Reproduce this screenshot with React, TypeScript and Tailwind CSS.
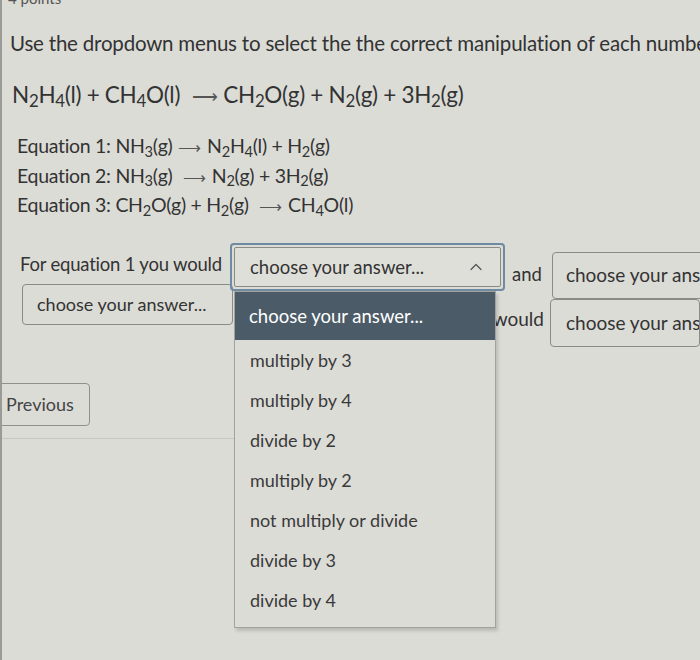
import { ChevronUp } from 'lucide-react';

const options = [
    'multiply by 3',
    'multiply by 4',
    'divide by 2',
    'multiply by 2',
    'not multiply or divide',
    'divide by 3',
    'divide by 4',
];

// 화학식 아래첨자 (preflight의 sub 스타일 사용)
const Sub = ({ children }: { children: React.ReactNode }) => <sub>{children}</sub>;

const Arrow = () => <span className="text-[0.8em] text-[#555] mx-[6px]">⟶</span>;

export default function App() {
    return (
        <div
            className="w-[700px] h-[660px] overflow-hidden bg-[#dcdcd7] text-[#333] relative border-l-2 border-[#9a9a96]"
            style={{ fontFamily: 'Lato, "Open Sans", sans-serif' }}
        >
            {/* 상단 점수 (잘림) */}
            <div className="-mt-[13px] ml-[6px] text-[15px] text-[#555]">4 points</div>

            <p className="mt-[18px] ml-[8px] text-[20.5px] whitespace-nowrap tracking-[-0.2px]">
                Use the dropdown menus to select the the correct manipulation of each number.
            </p>

            <p className="mt-[20px] ml-[10px] text-[22.5px] whitespace-nowrap tracking-[-0.3px]">
                N<Sub>2</Sub>H<Sub>4</Sub>(l) + CH<Sub>4</Sub>O(l) <Arrow />CH<Sub>2</Sub>O(g) + N<Sub>2</Sub>(g) + 3H<Sub>2</Sub>(g)
            </p>

            <div className="mt-[20px] ml-[15px] text-[19.5px] leading-[28.5px] whitespace-nowrap tracking-[-0.3px]">
                <div>Equation 1: NH<Sub>3</Sub>(g)<Arrow />N<Sub>2</Sub>H<Sub>4</Sub>(l) + H<Sub>2</Sub>(g)</div>
                <div>Equation 2: NH<Sub>3</Sub>(g) <Arrow />N<Sub>2</Sub>(g) + 3H<Sub>2</Sub>(g)</div>
                <div>Equation 3: CH<Sub>2</Sub>O(g) + H<Sub>2</Sub>(g) <Arrow />CH<Sub>4</Sub>O(l)</div>
            </div>

            {/* 드롭다운 행 1 */}
            <div className="mt-[22px] flex items-start text-[18.5px] leading-[24px] whitespace-nowrap">
                <span className="ml-[18px] mt-[9px] w-[210px] shrink-0 tracking-[-0.2px]">For equation 1 you would</span>
                <div className="relative z-10 shrink-0">
                    <div className="w-[275px] h-[48px] rounded-[4px] border-2 border-[#6f8aa3] p-[2px]">
                        <div className="h-full rounded-[2px] border border-[#8a8a86] bg-[#dfdfda] flex items-center justify-between pl-[15px] pr-[14px]">
                            <span>choose your answer...</span>
                            <ChevronUp size={20} strokeWidth={1.5} className="text-[#555]" />
                        </div>
                    </div>
                    {/* 펼쳐진 옵션 목록 */}
                    <ul className="absolute left-[4px] top-[48px] w-[262px] pb-[7px] bg-[#dcdcd7] border border-[#a2a29e] shadow-[2px_3px_3px_rgba(0,0,0,0.15)] text-[18px]">
                        <li className="h-[48px] bg-[#4b5c68] text-white flex items-center pl-[14px] text-[18.5px]">
                            choose your answer...
                        </li>
                        {options.map((o) => (
                            <li key={o} className="h-[40px] flex items-center pl-[15px] text-[#3a3a3a]">
                                {o}
                            </li>
                        ))}
                    </ul>
                </div>
                <span className="ml-[7px] mt-[19px]">and</span>
                <div className="ml-[10px] mt-[9px] w-[160px] h-[47px] shrink-0 rounded-[4px] border border-[#8a8a86] flex items-center pl-[13px] text-[19px]">
                    choose your answer...
                </div>
            </div>

            {/* 드롭다운 행 2 */}
            <div className="-mt-[15px] flex items-start text-[18px] leading-[24px] whitespace-nowrap">
                <div className="ml-[20px] w-[211px] h-[41px] shrink-0 rounded-[4px] border border-[#8a8a86] flex items-center pl-[14px]">
                    choose your answer...
                </div>
                <span className="flex-1 text-right mr-[6px] mt-[23px] text-[19px]">and for equation 2 you would</span>
                <div className="mt-[15px] w-[150px] h-[48px] shrink-0 rounded-[4px] border border-[#8a8a86] flex items-center pl-[15px] text-[19px] overflow-hidden">
                    choose your answer...
                </div>
            </div>

            {/* 이전 버튼 */}
            <div className="mt-[36px] w-[234px] border-b border-[#c8c8c3] pb-[12px]">
                <button className="-ml-[6px] w-[94px] h-[43px] rounded-[4px] border border-[#8f8f8b] text-left pl-[9px] text-[18px] text-[#444]">
                    Previous
                </button>
            </div>
        </div>
    );
}
